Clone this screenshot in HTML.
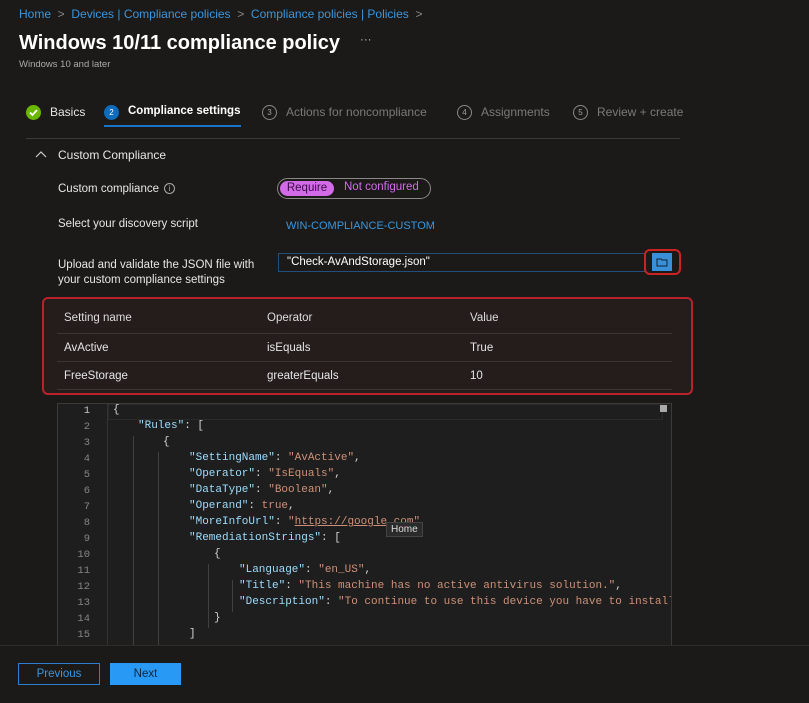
<!DOCTYPE html>
<html><head><meta charset="utf-8"><style>
*{margin:0;padding:0;box-sizing:border-box}
body{width:809px;height:703px;background:#1b1a19;font-family:"Liberation Sans",sans-serif;color:#e6e6e6;position:relative;overflow:hidden;font-size:11.5px}
.a{position:absolute;white-space:nowrap}
.blue{color:#3a96dd}
.code{font-family:"Liberation Mono",monospace;font-size:11px}
.ln{position:absolute;width:30px;text-align:right;left:60px;color:#858585;font-family:"Liberation Mono",monospace;font-size:10.5px}
.k{color:#9cdcfe}.s{color:#ce9178}.p{color:#d4d4d4}
.step{position:absolute;top:105px;width:15px;height:15px;border-radius:50%;border:1px solid #8a8886;color:#a0a0a0;font-size:8px;text-align:center;line-height:13px}
.gray{color:#7a7a7a;font-size:12px}
</style></head><body>
<div class="a blue" style="left:19px;top:7px;font-size:12px">Home <span style="color:#888">&nbsp;&gt;&nbsp;</span> Devices | Compliance policies <span style="color:#888">&nbsp;&gt;&nbsp;</span> Compliance policies | Policies <span style="color:#888">&nbsp;&gt;</span></div>
<div class="a" style="left:19px;top:32px;font-size:20px;font-weight:bold;color:#fff">Windows 10/11 compliance policy</div>
<div class="a" style="left:360px;top:34px;color:#bbb">···</div>
<div class="a" style="left:19px;top:59px;font-size:9.5px;color:#aaa">Windows 10 and later</div>

<div class="a" style="left:26px;top:105px;width:15px;height:15px;border-radius:50%;background:#6bb700"></div>
<svg class="a" style="left:26px;top:105px" width="15" height="15"><path d="M4 7.5l2.5 2.5 4.5-5" stroke="#fff" stroke-width="1.8" fill="none"/></svg>
<div class="a" style="left:50px;top:105px;font-size:12px">Basics</div>
<div class="a" style="left:104px;top:105px;width:15px;height:15px;border-radius:50%;background:#0f6cbd;color:#fff;font-size:8px;text-align:center;line-height:15px">2</div>
<div class="a" style="left:128px;top:105px;font-size:11.5px;font-weight:bold;color:#fff">Compliance settings</div>
<div class="a" style="left:104px;top:125px;width:137px;height:2px;background:#1a73c8"></div>
<div class="step" style="left:262px">3</div><div class="a gray" style="left:286px;top:105px">Actions for noncompliance</div>
<div class="step" style="left:457px">4</div><div class="a gray" style="left:481px;top:105px">Assignments</div>
<div class="step" style="left:573px">5</div><div class="a gray" style="left:597px;top:105px">Review + create</div>
<div class="a" style="left:26px;top:138px;width:654px;height:1px;background:#3b3a39"></div>

<svg class="a" style="left:35px;top:150px" width="12" height="10"><path d="M1 7l5-5 5 5" stroke="#ccc" stroke-width="1.2" fill="none"/></svg>
<div class="a" style="left:58px;top:148px;font-size:12px">Custom Compliance</div>
<div class="a" style="left:58px;top:183px">Custom compliance</div>
<div class="a" style="left:164px;top:183px;width:11px;height:11px;border:1px solid #aaa;border-radius:50%;font-size:8px;text-align:center;line-height:9px;color:#aaa">i</div>
<div class="a" style="left:277px;top:178px;width:154px;height:21px;border:1px solid #8a8886;border-radius:11px"></div>
<div class="a" style="left:280px;top:181px;width:54px;height:15px;border-radius:8px;background:#d36be8;color:#3a0a45;font-size:11.5px;text-align:center;line-height:15px">Require</div>
<div class="a" style="left:344px;top:181px;color:#d36be8;font-size:11.5px">Not configured</div>
<div class="a" style="left:58px;top:218px">Select your discovery script</div>
<div class="a blue" style="left:286px;top:220px;font-size:11px">WIN-COMPLIANCE-CUSTOM</div>
<div class="a" style="left:58px;top:258px;line-height:15px">Upload and validate the JSON file with<br>your custom compliance settings</div>
<div class="a" style="left:278px;top:253px;width:367px;height:19px;border:1px solid #1f4f7a;padding-left:8px;line-height:17px;color:#fff">"Check-AvAndStorage.json"</div>
<div class="a" style="left:644px;top:249px;width:37px;height:26px;border:2px solid #c22;border-radius:6px"></div>
<div class="a" style="left:652px;top:253px;width:20px;height:18px;background:#3a8fd9"></div>
<svg class="a" style="left:652px;top:253px" width="20" height="18"><path d="M5 6h4l1 1h5v6H5z" stroke="#123" stroke-width="1" fill="none"/></svg>

<div class="a" style="left:42px;top:297px;width:651px;height:98px;border:2px solid #b8232b;border-radius:6px;background:#251c1c"></div>
<div class="a" style="left:64px;top:312px;color:#ddd">Setting name</div>
<div class="a" style="left:267px;top:312px;color:#ddd">Operator</div>
<div class="a" style="left:470px;top:312px;color:#ddd">Value</div>
<div class="a" style="left:57px;top:333px;width:615px;height:1px;background:#3b3434"></div>
<div class="a" style="left:64px;top:342px">AvActive</div>
<div class="a" style="left:267px;top:342px">isEquals</div>
<div class="a" style="left:470px;top:342px">True</div>
<div class="a" style="left:57px;top:361px;width:615px;height:1px;background:#3b3434"></div>
<div class="a" style="left:64px;top:370px">FreeStorage</div>
<div class="a" style="left:267px;top:370px">greaterEquals</div>
<div class="a" style="left:470px;top:370px">10</div>
<div class="a" style="left:57px;top:389px;width:615px;height:1px;background:#3b3434"></div>

<div class="a" style="left:57px;top:403px;width:615px;height:243px;border:1px solid #3b3a39;background:#1e1e1e"></div>
<div class="a" style="left:107px;top:404px;width:1px;height:241px;background:#333"></div>
<div class="a" style="left:108px;top:404px;width:555px;height:16px;border:1px solid #2a2a2a"></div>
<div class="a" style="left:660px;top:405px;width:7px;height:7px;background:#aaa"></div>
<div class="a" style="left:133px;top:436px;width:1px;height:210px;background:#404040"></div>
<div class="a" style="left:158px;top:452px;width:1px;height:194px;background:#404040"></div>
<div class="a" style="left:208px;top:564px;width:1px;height:64px;background:#404040"></div>
<div class="a" style="left:232px;top:580px;width:1px;height:32px;background:#404040"></div>
<div class="ln" style="top:405px;color:#c6c6c6">1</div><div class="ln" style="top:421px">2</div><div class="ln" style="top:437px">3</div><div class="ln" style="top:453px">4</div><div class="ln" style="top:469px">5</div><div class="ln" style="top:485px">6</div><div class="ln" style="top:501px">7</div><div class="ln" style="top:517px">8</div><div class="ln" style="top:533px">9</div><div class="ln" style="top:549px">10</div><div class="ln" style="top:565px">11</div><div class="ln" style="top:581px">12</div><div class="ln" style="top:597px">13</div><div class="ln" style="top:613px">14</div><div class="ln" style="top:629px">15</div>
<div class="a code p" style="left:113px;top:404px">{</div>
<div class="a code" style="left:138px;top:420px"><span class="k">"Rules"</span><span class="p">: [</span></div>
<div class="a code p" style="left:163px;top:436px">{</div>
<div class="a code" style="left:189px;top:452px"><span class="k">"SettingName"</span><span class="p">: </span><span class="s">"AvActive"</span><span class="p">,</span></div>
<div class="a code" style="left:189px;top:468px"><span class="k">"Operator"</span><span class="p">: </span><span class="s">"IsEquals"</span><span class="p">,</span></div>
<div class="a code" style="left:189px;top:484px"><span class="k">"DataType"</span><span class="p">: </span><span class="s">"Boolean"</span><span class="p">,</span></div>
<div class="a code" style="left:189px;top:500px"><span class="k">"Operand"</span><span class="p">: </span><span class="s">true</span><span class="p">,</span></div>
<div class="a code" style="left:189px;top:516px"><span class="k">"MoreInfoUrl"</span><span class="p">: </span><span class="s">"<u>https://google.com</u>"</span></div>
<div class="a code" style="left:189px;top:532px"><span class="k">"RemediationStrings"</span><span class="p">: [</span></div>
<div class="a code p" style="left:214px;top:548px">{</div>
<div class="a code" style="left:239px;top:564px"><span class="k">"Language"</span><span class="p">: </span><span class="s">"en_US"</span><span class="p">,</span></div>
<div class="a code" style="left:239px;top:580px"><span class="k">"Title"</span><span class="p">: </span><span class="s">"This machine has no active antivirus solution."</span><span class="p">,</span></div>
<div class="a code" style="left:239px;top:596px;width:432px;overflow:hidden"><span class="k">"Description"</span><span class="p">: </span><span class="s">"To continue to use this device you have to install a</span></div>
<div class="a code p" style="left:214px;top:612px">}</div>
<div class="a code p" style="left:189px;top:628px">]</div>
<div class="a" style="left:386px;top:522px;padding:1px 4px;background:#2b2b2b;border:1px solid #444;font-size:10px;color:#ddd">Home</div>
<div class="a" style="left:0;top:645px;width:809px;height:58px;background:#1b1a19;border-top:1px solid #2d2c2b"></div>
<div class="a" style="left:18px;top:663px;width:82px;height:22px;border:1px solid #2f7ed1;color:#3a96dd;text-align:center;line-height:20px;font-size:11.5px">Previous</div>
<div class="a" style="left:110px;top:663px;width:71px;height:22px;background:#2899f5;color:#0b2540;text-align:center;line-height:22px;font-size:11.5px">Next</div>
</body></html>
